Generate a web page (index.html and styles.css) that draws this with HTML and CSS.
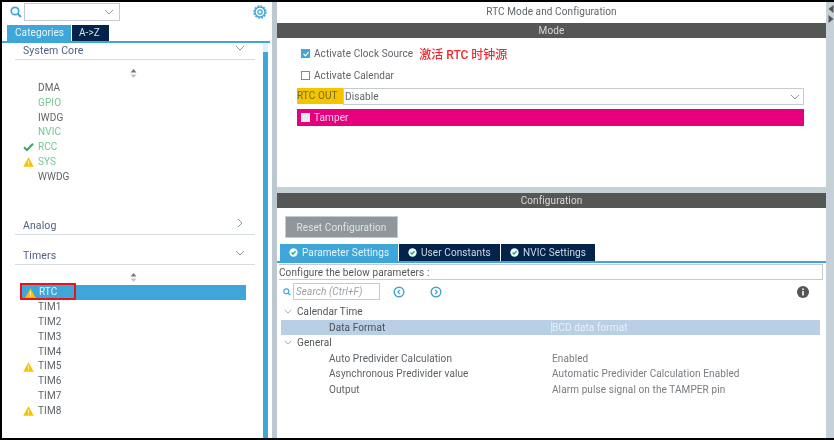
FILE: index.html
```
<!DOCTYPE html>
<html lang="en">
<head>
<meta charset="utf-8">
<title>RTC Mode and Configuration</title>
<link rel="stylesheet" href="styles.css">
</head>
<body>
<svg class="defs" width="0" height="0" aria-hidden="true">
  <symbol id="warn" viewBox="0 0 11 10"><path d="M5.5 .3 10.8 9.7H.2Z" fill="#f5c400"/><path d="M5 3.4h1v3.4H5zM5 7.5h1v1H5z" fill="#fff6c8"/></symbol>
  <symbol id="ok" viewBox="0 0 10 10"><circle cx="5" cy="5" r="4.6" fill="#f2fbf6"/><path d="M2.8 5.1 4.4 6.7 7.3 3.6" fill="none" stroke="#2fa873" stroke-width="1.6"/></symbol>
  <symbol id="mag" viewBox="0 0 12 12"><circle cx="5" cy="5" r="3.7" fill="none" stroke="#3ea6d9" stroke-width="1.7"/><path d="M7.7 7.7 11 11" stroke="#3ea6d9" stroke-width="2"/></symbol>
  <symbol id="sort" viewBox="0 0 7 9"><path d="M3.5 0 6.5 3.6H.5Z" fill="#777"/><path d="M3.5 9 6.5 5.4H.5Z" fill="#c4c4c4"/></symbol>
  <symbol id="down" viewBox="0 0 10 6"><path d="M1 1 5 5 9 1" fill="none" stroke="#8b98a3" stroke-width="1"/></symbol>
  <symbol id="right" viewBox="0 0 6 10"><path d="M1 1 5 5 1 9" fill="none" stroke="#8b98a3" stroke-width="1"/></symbol>
</svg>
<div class="app">
  <aside class="left">
    <div class="finder">
      <svg class="i-mag"><use href="#mag"/></svg>
      <div class="combo"><svg class="i-down"><use href="#down"/></svg></div>
      <svg class="i-gear" viewBox="0 0 14 14"><circle cx="7" cy="7" r="2.2" fill="none" stroke="#3ea6d9" stroke-width="1.3"/><circle cx="7" cy="7" r="5" fill="none" stroke="#3ea6d9" stroke-width="1.4"/><circle cx="7" cy="7" r="6" fill="none" stroke="#3ea6d9" stroke-width="1.4" stroke-dasharray="1.9 1.2"/></svg>
    </div>
    <div class="tabs">
      <div class="tab active">Categories</div>
      <div class="tab">A-&gt;Z</div>
    </div>
    <div class="tree-wrap">
      <div class="tree">
        <div class="acc"><span>System Core</span><svg class="i-down acc-ic"><use href="#down"/></svg></div>
        <div class="sorter s1"><svg class="i-sort"><use href="#sort"/></svg></div>
        <ul class="list">
          <li>DMA</li>
          <li class="green">GPIO</li>
          <li>IWDG</li>
          <li class="green">NVIC</li>
          <li class="green"><svg class="mark" viewBox="0 0 11 10"><path d="M1 5.2 4 8 10 1.8" fill="none" stroke="#35a869" stroke-width="2"/></svg>RCC</li>
          <li class="green"><svg class="mark"><use href="#warn"/></svg>SYS</li>
          <li>WWDG</li>
        </ul>
        <div class="acc analog"><span>Analog</span><svg class="i-right acc-ic"><use href="#right"/></svg></div>
        <div class="acc timers"><span>Timers</span><svg class="i-down acc-ic"><use href="#down"/></svg></div>
        <div class="sorter s2"><svg class="i-sort"><use href="#sort"/></svg></div>
        <ul class="list">
          <li class="sel"><svg class="mark"><use href="#warn"/></svg>RTC<span class="redbox"></span></li>
          <li>TIM1</li>
          <li>TIM2</li>
          <li>TIM3</li>
          <li>TIM4</li>
          <li><svg class="mark"><use href="#warn"/></svg>TIM5</li>
          <li>TIM6</li>
          <li>TIM7</li>
          <li><svg class="mark"><use href="#warn"/></svg>TIM8</li>
        </ul>
      </div>
      <div class="scroll"><div class="thumb"></div></div>
    </div>
  </aside>
  <main class="right">
    <h1 class="title">RTC Mode and Configuration</h1>
    <div class="bar">Mode</div>
    <section class="mode">
      <div class="check-row"><span class="cb on"><svg viewBox="0 0 10 10"><path d="M2 5 4.2 7.3 8.2 2.6" fill="none" stroke="#fff" stroke-width="1.5"/></svg></span><span>Activate Clock Source</span><span class="note">激活 RTC 时钟源</span></div>
      <div class="check-row second"><span class="cb"></span><span>Activate Calendar</span></div>
      <div class="out-row"><span class="out-label">RTC OUT</span><div class="select">Disable<svg class="i-down"><use href="#down"/></svg></div></div>
      <div class="tamper"><span class="cb light"></span>Tamper</div>
    </section>
    <div class="split"></div>
    <div class="bar">Configuration</div>
    <section class="config">
      <button class="reset" type="button">Reset Configuration</button>
      <div class="ctabs">
        <div class="ctab active w1"><svg class="i-ok"><use href="#ok"/></svg>Parameter Settings</div>
        <div class="ctab w2"><svg class="i-ok"><use href="#ok"/></svg>User Constants</div>
        <div class="ctab w3"><svg class="i-ok"><use href="#ok"/></svg>NVIC Settings</div>
      </div>
      <div class="hint">Configure the below parameters :</div>
      <div class="tools">
        <svg class="i-mag small"><use href="#mag"/></svg>
        <div class="search">Search (Ctrl+F)</div>
        <svg class="nav" viewBox="0 0 10 10"><circle cx="5" cy="5" r="4" fill="none" stroke="#3ea6d9" stroke-width="1.2"/><path d="M5.8 3.2 4 5l1.8 1.8" fill="none" stroke="#3ea6d9"/></svg>
        <svg class="nav second" viewBox="0 0 10 10"><circle cx="5" cy="5" r="4" fill="none" stroke="#3ea6d9" stroke-width="1.2"/><path d="M4.2 3.2 6 5 4.2 6.800" fill="none" stroke="#3ea6d9"/></svg>
        <svg class="info" viewBox="0 0 12 12"><circle cx="6" cy="6" r="6" fill="#555"/><path d="M5.200 2.500h1.600v1.500H5.200zM5.200 5h1.600v4.500H5.200z" fill="#fff"/></svg>
      </div>
      <div class="group"><svg class="i-down g"><use href="#down"/></svg>Calendar Time</div>
      <div class="param picked"><span class="k">Data Format</span><span class="v">BCD data format</span></div>
      <div class="group"><svg class="i-down g"><use href="#down"/></svg>General</div>
      <div class="param"><span class="k">Auto Predivider Calculation</span><span class="v">Enabled</span></div>
      <div class="param"><span class="k">Asynchronous Predivider value</span><span class="v">Automatic Predivider Calculation Enabled</span></div>
      <div class="param"><span class="k">Output</span><span class="v">Alarm pulse signal on the TAMPER pin</span></div>
    </section>
  </main>
  <div class="rail">
    <svg class="rail-ic" viewBox="0 0 6 18"><path d="M5.500 0v8L.500 4Z M.500 10v8l5-4Z" fill="#555"/></svg>
  </div>
</div>
</body>
</html>
```
FILE: styles.css
```
* { box-sizing: border-box; }
html, body { margin: 0; padding: 0; }
body { width: 834px; height: 440px; overflow: hidden; background: #fff; font-family: Roboto, "Noto Sans CJK SC", sans-serif; font-size: 10px; color: #5f6468; }
.defs { position: absolute; }
svg { display: block; flex: none; }
ul { list-style: none; margin: 0; padding: 0; }

.app { display: flex; width: 834px; height: 440px; border-top: 2px solid #000; border-bottom: 2px solid #000; border-left: 2px solid #000; filter: blur(.5px); letter-spacing: .1px; }

.left { width: 275px; display: flex; flex-direction: column; border-right: 5px solid #bcc8cf; flex: none; }
.finder { height: 23px; display: flex; align-items: flex-start; padding: 1px 0 0 8px; }
.i-mag { width: 12px; height: 12px; margin-top: 3px; }
.combo { width: 96px; height: 18px; margin-left: 2px; border: 1px solid #c3cbd1; display: flex; justify-content: flex-end; align-items: center; padding-right: 5px; }
.i-down { width: 10px; height: 6px; }
.i-right { width: 6px; height: 10px; }
.i-gear { width: 14px; height: 14px; margin: 2px 0 0 133px; }

.tabs { display: flex; height: 18px; padding-left: 5px; gap: 1px; border-bottom: 2px solid #3ea6d9; width: 268px; }
.tab { height: 16px; line-height: 16px; padding: 0 7px; background: #03234b; color: #d8e2ea; }
.tab.active { width: 64px; background: #3ea6d9; padding: 0 0 0 8px; color: #e8f5fb; }
.tab:nth-child(2) { width: 37px; }

.tree-wrap { flex: 1; display: flex; min-height: 0; }
.tree { width: 259px; padding-left: 13px; }
.acc { height: 17px; margin-right: 6px; border-bottom: 1px solid #d5dde2; display: flex; align-items: center; justify-content: space-between; padding: 0 10px 2px 8px; color: #4f5f82; font-size: 10.5px; }
.acc-ic { margin-top: -4px; }
.acc .i-right { margin-right: 2px; }
.analog { margin-top: 34px; }
.timers { margin-top: 13px; }
.sorter { display: flex; justify-content: center; padding-right: 10px; }
.s1 { height: 21px; padding-top: 9px; }
.s2 { height: 20px; padding-top: 8px; }
.i-sort { width: 7px; height: 9px; }
.list li { position: relative; height: 14.75px; line-height: 14.75px; padding-left: 23px; color: #5f6468; display: flex; align-items: center; }
.list li.green { color: #74c794; }
.mark { width: 11px; height: 10px; margin-left: -15px; margin-right: 4px; }
.list li.sel { background: #3ea6d9; color: #e8f5fb; margin-left: 7px; width: 224px; padding-left: 16px; height: 15px; }
.sel .mark { margin-left: -13px; margin-right: 3px; }
.redbox { position: absolute; left: -2px; top: -2px; width: 56px; height: 17px; border: 2px solid #e8141c; }
.scroll { width: 5px; margin-left: 2px; background: #e4f0f7; padding-top: 9px; }
.thumb { height: 100%; background: #3ea6d9; }

.right { width: 549px; flex: none; display: flex; flex-direction: column; }
.title { height: 21px; margin: 0; font-weight: 400; font-size: 10px; line-height: 20px; text-align: center; color: #5f6468; }
.bar { height: 15px; line-height: 15px; background: #555755; color: #d8d8d8; text-align: center; }
.mode { height: 149px; padding-left: 20px; }
.check-row { display: flex; align-items: center; height: 14px; margin-top: 8px; padding-left: 4px; }
.check-row.second { margin-top: 8px; }
.cb { width: 9px; height: 9px; border: 1px solid #7f8a92; margin-right: 4px; flex: none; background: #fff; }
.cb.on { background: #3ea6d9; border-color: #3ea6d9; }
.cb.on svg { width: 8px; height: 8px; }
.cb.light { background: #e9e9e9; border-color: #e9e9e9; }
.note { margin-left: 6px; color: #f0282d; font-size: 12px; font-weight: 500; letter-spacing: 0; }
.out-row { display: flex; margin-top: 6px; height: 17px; }
.out-label { width: 46px; height: 16px; line-height: 16px; background: #f5c400; color: #6f6a2a; white-space: nowrap; }
.select { width: 461px; height: 17px; line-height: 15px; border: 1px solid #c3cbd1; padding: 0 3px 0 1px; display: flex; align-items: center; justify-content: space-between; }
.tamper { width: 507px; height: 17px; margin-top: 4px; background: #e6007e; color: #f6d5e8; display: flex; align-items: center; padding-left: 4px; }
.split { height: 6px; background: #c5d0d7; }

.config { flex: 1; display: flex; flex-direction: column; }
.reset { width: 113px; height: 22px; margin: 8px 0 0 8px; border: 1px solid #c3cbd1; background: #8f979c; color: #dfe3e6; font: inherit; letter-spacing: inherit; padding: 0; }
.ctabs { display: flex; gap: 1px; height: 19px; margin-top: 6px; padding-left: 3px; border-bottom: 2px solid #3ea6d9; }
.ctab { height: 17px; background: #03234b; color: #cfdbe4; display: flex; align-items: center; padding-left: 9px; }
.ctab.active { background: #3ea6d9; color: #e8f5fb; }
.w1 { width: 118px; } .w2 { width: 101px; } .w3 { width: 94px; }
.i-ok { width: 9px; height: 9px; margin-right: 4px; }
.hint { height: 16px; line-height: 15px; margin: 1px 3px 0 2px; border: 1px solid #c3cbd1; border-left: 0; color: #555; }
.tools { display: flex; align-items: center; height: 19px; margin-top: 2px; padding-left: 6px; }
.i-mag.small { width: 8px; height: 8px; margin-top: 0; }
.search { width: 87px; height: 17px; line-height: 15px; margin-left: 2px; border: 1px solid #c3cbd1; padding-left: 2px; color: #9aa0a5; font-style: italic; }
.nav { width: 12px; height: 12px; margin-left: 13px; }
.nav.second { margin-left: 25px; }
.info { width: 12px; height: 12px; margin-left: 355px; }
.group { height: 15.5px; display: flex; align-items: center; padding-left: 7px; color: #50565a; }
.tools + .group { margin-top: 3px; }
.i-down.g { width: 8px; height: 5px; margin-right: 5px; }
.param { height: 15.5px; display: flex; align-items: center; margin: 0 6px 0 4px; }
.k { width: 271px; padding-left: 48px; color: #5c6165; white-space: nowrap; }
.v { color: #777c80; white-space: nowrap; }
.picked { background: #b8cfe5; }
.picked .k { color: #4a5157; border-right: 1px solid #dce8f2; }
.picked .v { color: #e8f0f7; }

.rail { flex: 1; background: #c5d0d7; padding: 3px 0 0 2px; }
.rail-ic { width: 6px; height: 18px; }
```
